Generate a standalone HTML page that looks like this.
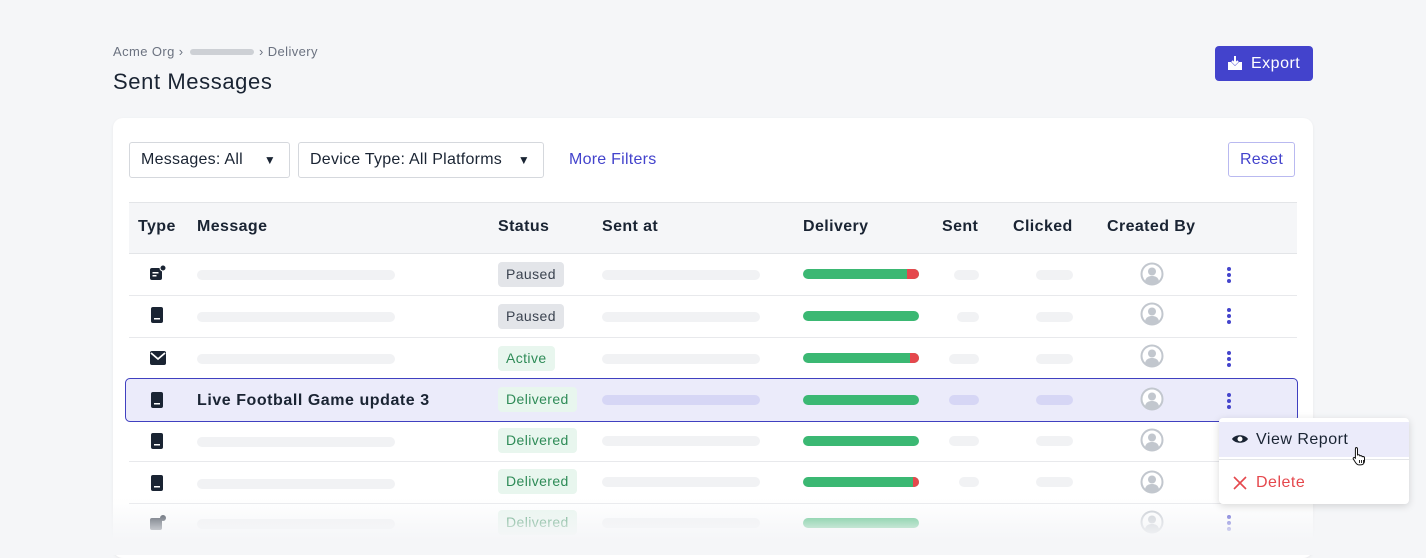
<!DOCTYPE html>
<html><head><style>
*{box-sizing:border-box;margin:0;padding:0}
body{width:1426px;height:555px;background:#f5f6f8;font-family:"Liberation Sans",sans-serif;color:#1a2433;position:relative;overflow:hidden;letter-spacing:.25px}
.a{position:absolute}
.sk{position:absolute;height:10px;border-radius:5px;background:#f1f2f4}
.badge{position:absolute;height:25px;line-height:25px;padding:0 8px;border-radius:4px;font-size:14px;letter-spacing:.4px}
.p{background:#e3e5e9;color:#3b4350}.g{background:#e8f6ee;color:#2e8b57}
.bar{position:absolute;left:803px;width:116px;height:10px;border-radius:5px;background:#3bb873;overflow:hidden}
.bar i{position:absolute;right:0;top:0;height:10px;background:#e5484d}
.dots{position:absolute;left:1227px;width:4px}
.dots b{display:block;width:4px;height:4px;border-radius:2px;background:#4444cc;margin-bottom:2px}
.hr{position:absolute;left:129px;width:1168px;height:1px;background:#e8e9ec}
.hd{position:absolute;top:218px;font-weight:bold;font-size:16px;letter-spacing:.4px}
</style></head><body>
<div class="a" style="left:113px;top:44px;font-size:13px;color:#6b7280;letter-spacing:.4px">Acme Org ›</div>
<div class="a" style="left:190px;top:49px;width:64px;height:6px;border-radius:3px;background:#cdd0d5"></div>
<div class="a" style="left:259px;top:44px;font-size:13px;color:#6b7280;letter-spacing:.4px">› Delivery</div>
<div class="a" style="left:113px;top:69px;font-size:22px;letter-spacing:.6px">Sent Messages</div>
<div class="a" style="left:1215px;top:46px;width:98px;height:35px;background:#4343cc;border-radius:4px;color:#fff;font-size:16px;line-height:35px;padding-left:36px;letter-spacing:.5px">Export</div>
<svg class="a" style="left:1227px;top:55px" width="16" height="16" viewBox="0 0 16 16"><path d="M1 7v8h14V7h-3l-4 4-4-4z" fill="#fff"/><path d="M8 1v8M5 6l3 3 3-3" stroke="#fff" stroke-width="2" fill="none"/></svg>

<div class="a" style="left:113px;top:118px;width:1200px;height:440px;background:#fff;border-radius:10px;box-shadow:0 1px 3px rgba(0,0,0,.06)"></div>
<div class="a" style="left:129px;top:142px;width:161px;height:36px;border:1px solid #d5d8dd;border-radius:3px;font-size:16px;line-height:34px;padding-left:11px">Messages: All<span style="position:absolute;right:13px;font-size:12px">▼</span></div>
<div class="a" style="left:298px;top:142px;width:246px;height:36px;border:1px solid #d5d8dd;border-radius:3px;font-size:16px;line-height:34px;padding-left:11px">Device Type: All Platforms<span style="position:absolute;right:13px;font-size:12px">▼</span></div>
<div class="a" style="left:569px;top:151px;font-size:16px;color:#4343cc">More Filters</div>
<div class="a" style="left:1228px;top:142px;width:67px;height:35px;border:1px solid #b9b9f0;border-radius:3px;font-size:16px;line-height:33px;text-align:center;color:#4343cc">Reset</div>

<div class="a" style="left:129px;top:202px;width:1168px;height:52px;background:#f5f6f8;border-top:1px solid #e3e5e8;border-bottom:1px solid #e3e5e8"></div>
<div class="hd" style="left:138px">Type</div><div class="hd" style="left:197px">Message</div><div class="hd" style="left:498px">Status</div><div class="hd" style="left:602px">Sent at</div><div class="hd" style="left:803px">Delivery</div><div class="hd" style="left:942px">Sent</div><div class="hd" style="left:1013px">Clicked</div><div class="hd" style="left:1107px">Created By</div>

<div class="hr" style="top:295px"></div><div class="hr" style="top:337px"></div><div class="hr" style="top:461px"></div><div class="hr" style="top:503px"></div>
<div class="a" style="left:125px;top:378px;width:1173px;height:44px;background:#ebebfa;border:1px solid #4040c0;border-radius:5px"></div>

<svg class="a" style="left:149px;top:264px" width="18" height="18"><rect x="1" y="4" width="12" height="12" rx="2" fill="#1a2433"/><circle cx="14" cy="4" r="3" fill="#1a2433" stroke="#fff" stroke-width="1"/><rect x="3.5" y="8" width="6" height="1.5" fill="#fff"/><rect x="3.5" y="11" width="4" height="1.5" fill="#fff"/></svg>
<svg class="a" style="left:151px;top:307px" width="14" height="18"><rect x="0" y="0" width="12" height="16" rx="2" fill="#1a2433"/><rect x="3" y="11" width="6" height="1.5" fill="#fff"/></svg>
<svg class="a" style="left:149px;top:350px" width="18" height="16"><rect x="1" y="1" width="16" height="14" rx="2" fill="#1a2433"/><path d="M2 3l7 6 7-6" stroke="#fff" stroke-width="1.8" fill="none"/></svg>
<svg class="a" style="left:151px;top:392px" width="14" height="18"><rect x="0" y="0" width="12" height="16" rx="2" fill="#1a2433"/><rect x="3" y="11" width="6" height="1.5" fill="#fff"/></svg>
<svg class="a" style="left:151px;top:433px" width="14" height="18"><rect x="0" y="0" width="12" height="16" rx="2" fill="#1a2433"/><rect x="3" y="11" width="6" height="1.5" fill="#fff"/></svg>
<svg class="a" style="left:151px;top:475px" width="14" height="18"><rect x="0" y="0" width="12" height="16" rx="2" fill="#1a2433"/><rect x="3" y="11" width="6" height="1.5" fill="#fff"/></svg>
<svg class="a" style="left:149px;top:514px" width="18" height="18"><rect x="1" y="4" width="12" height="12" rx="2" fill="#1a2433"/><circle cx="14" cy="4" r="3" fill="#1a2433"/></svg>

<div class="sk" style="left:197px;top:270px;width:198px"></div>
<div class="sk" style="left:197px;top:312px;width:198px"></div>
<div class="sk" style="left:197px;top:354px;width:198px"></div>
<div class="a" style="left:197px;top:392px;font-size:16px;font-weight:bold;letter-spacing:.55px">Live Football Game update 3</div>
<div class="sk" style="left:197px;top:437px;width:198px"></div>
<div class="sk" style="left:197px;top:479px;width:198px"></div>
<div class="sk" style="left:197px;top:519px;width:198px"></div>

<div class="badge p" style="left:498px;top:262px">Paused</div>
<div class="badge p" style="left:498px;top:304px">Paused</div>
<div class="badge g" style="left:498px;top:346px">Active</div>
<div class="badge g" style="left:498px;top:387px">Delivered</div>
<div class="badge g" style="left:498px;top:428px">Delivered</div>
<div class="badge g" style="left:498px;top:469px">Delivered</div>
<div class="badge g" style="left:498px;top:510px">Delivered</div>

<div class="sk" style="left:602px;top:270px;width:158px"></div>
<div class="sk" style="left:602px;top:312px;width:158px"></div>
<div class="sk" style="left:602px;top:354px;width:158px"></div>
<div class="sk" style="left:602px;top:395px;width:158px;background:#d6d6f5"></div>
<div class="sk" style="left:602px;top:436px;width:158px"></div>
<div class="sk" style="left:602px;top:477px;width:158px"></div>
<div class="sk" style="left:602px;top:518px;width:158px"></div>

<div class="bar" style="top:269px"><i style="width:12px"></i></div>
<div class="bar" style="top:311px"></div>
<div class="bar" style="top:353px"><i style="width:9px"></i></div>
<div class="bar" style="top:395px"></div>
<div class="bar" style="top:436px"></div>
<div class="bar" style="top:477px"><i style="width:6px"></i></div>
<div class="bar" style="top:518px"></div>

<div class="sk" style="left:954px;top:270px;width:25px"></div><div class="sk" style="left:1036px;top:270px;width:37px"></div>
<div class="sk" style="left:957px;top:312px;width:22px"></div><div class="sk" style="left:1036px;top:312px;width:37px"></div>
<div class="sk" style="left:949px;top:354px;width:30px"></div><div class="sk" style="left:1036px;top:354px;width:37px"></div>
<div class="sk" style="left:949px;top:395px;width:30px;background:#d6d6f5"></div><div class="sk" style="left:1036px;top:395px;width:37px;background:#d6d6f5"></div>
<div class="sk" style="left:949px;top:436px;width:30px"></div><div class="sk" style="left:1036px;top:436px;width:37px"></div>
<div class="sk" style="left:959px;top:477px;width:20px"></div><div class="sk" style="left:1036px;top:477px;width:37px"></div>

<svg width="0" height="0"><defs><g id="av"><circle cx="12" cy="12" r="10.5" fill="#fff" stroke="#c2c7ce" stroke-width="2"/><circle cx="12" cy="9.5" r="4" fill="#c2c7ce"/><path d="M5 19c1-4 4-5 7-5s6 1 7 5a10 10 0 0 1-14 0z" fill="#c2c7ce"/></g></defs></svg>
<svg class="a" style="left:1140px;top:262px" width="24" height="24"><use href="#av"/></svg>
<svg class="a" style="left:1140px;top:302px" width="24" height="24"><use href="#av"/></svg>
<svg class="a" style="left:1140px;top:344px" width="24" height="24"><use href="#av"/></svg>
<svg class="a" style="left:1140px;top:387px" width="24" height="24"><use href="#av"/></svg>
<svg class="a" style="left:1140px;top:428px" width="24" height="24"><use href="#av"/></svg>
<svg class="a" style="left:1140px;top:470px" width="24" height="24"><use href="#av"/></svg>
<svg class="a" style="left:1140px;top:510px" width="24" height="24"><use href="#av"/></svg>

<div class="dots" style="top:267px"><b></b><b></b><b></b></div>
<div class="dots" style="top:308px"><b></b><b></b><b></b></div>
<div class="dots" style="top:351px"><b></b><b></b><b></b></div>
<div class="dots" style="top:393px"><b></b><b></b><b></b></div>
<div class="dots" style="top:515px"><b></b><b></b><b></b></div>

<div class="a" style="left:0;top:498px;width:1426px;height:57px;background:linear-gradient(rgba(245,246,248,0),rgba(245,246,248,.7) 50%,#f5f6f8 75%)"></div>

<div class="a" style="left:1219px;top:418px;width:190px;height:86px;background:#fff;border-radius:4px;box-shadow:0 2px 8px rgba(0,0,0,.15)"></div>
<div class="a" style="left:1219px;top:422px;width:190px;height:35px;background:#ebebfa"></div>
<div class="a" style="left:1219px;top:459px;width:190px;height:1px;background:#e3e5e8"></div>
<svg class="a" style="left:1231px;top:433px" width="18" height="12"><path d="M1 6C4 1 14 1 17 6C14 11 4 11 1 6z" fill="#1a2433"/><circle cx="9" cy="6" r="2.5" fill="#fff"/></svg>
<div class="a" style="left:1256px;top:431px;font-size:16px;letter-spacing:.5px">View Report</div>
<svg class="a" style="left:1233px;top:476px" width="14" height="14"><path d="M1 1l12 12M13 1L1 13" stroke="#e5484d" stroke-width="1.6"/></svg>
<div class="a" style="left:1256px;top:474px;font-size:16px;color:#e5484d;letter-spacing:.5px">Delete</div>
<svg class="a" style="left:1352px;top:446px" width="16" height="20"><path d="M4 1.5c1 0 1.5.6 1.5 1.5v6l1-.3c.8 0 1.3.5 1.3 1.1l1-.2c.7 0 1.2.4 1.3 1l1-.1c.8 0 1.4.6 1.4 1.4v3c0 2.5-1.6 4-4 4H7.5C5.8 19 4.5 18 3.6 16.6L1.3 13c-.4-.7 0-1.5.8-1.5.5 0 .9.2 1.3.6V3c0-1 .6-1.5.6-1.5z" fill="#fff" stroke="#111" stroke-width="1"/><path d="M7.5 14v3M9.5 14v3M11.5 14v3" stroke="#111" stroke-width=".9"/></svg>
</body></html>
